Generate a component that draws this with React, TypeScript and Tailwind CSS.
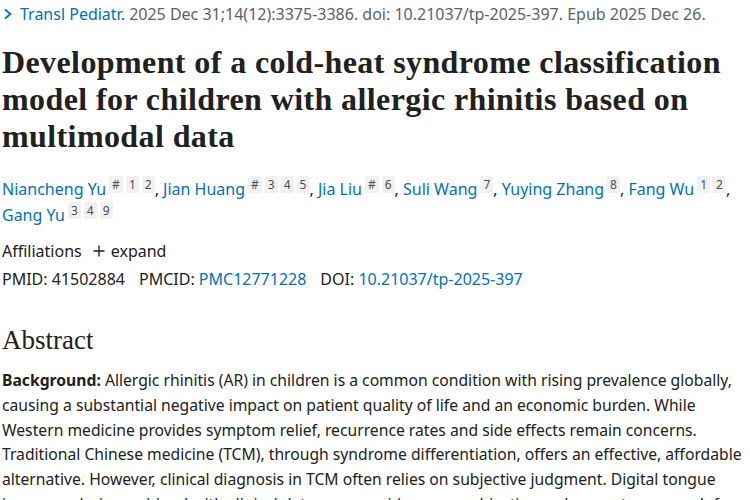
import React from "react"

const authors = [
  { name: "Niancheng Yu", sups: ["#", "1", "2"] },
  { name: "Jian Huang", sups: ["#", "3", "4", "5"] },
  { name: "Jia Liu", sups: ["#", "6"] },
  { name: "Suli Wang", sups: ["7"] },
  { name: "Yuying Zhang", sups: ["8"] },
  { name: "Fang Wu", sups: ["1", "2"] },
  { name: "Gang Yu", sups: ["3", "4", "9"] },
]

function Sup({ label }: { label: string }) {
  return (
    <span className="ml-[3px] inline-block rounded-[2px] bg-[#f1f1f1] px-[3px] align-[6px] text-[12px] leading-[17px] text-[#4d4d4d]">
      {label}
    </span>
  )
}

export default function App() {
  return (
    <div
      className="w-[750px] h-[500px] overflow-hidden bg-white pl-[2px] pr-[8px] text-[#212121]"
      style={{ fontFamily: '"Noto Sans", "Open Sans", sans-serif' }}
    >
      {/* citation line */}
      <div className="flex items-center pt-[2px] text-[16px] leading-[24px] text-[#5b616b]">
        <svg width="12" height="14" viewBox="0 0 12 14" className="mr-[6px]">
          <path d="M3 2.5 L8.5 7 L3 11.5" fill="none" stroke="#0071bc" strokeWidth="1.8" />
        </svg>
        <span className="text-[#0071bc]">Transl Pediatr.</span>
        <span>&nbsp;2025 Dec 31;14(12):3375-3386. doi: 10.21037/tp-2025-397. Epub 2025 Dec 26.</span>
      </div>

      {/* title */}
      <h1
        className="mt-[18px] text-[32px] font-bold leading-[37px] tracking-[0.4px] text-[#212121]"
        style={{ fontFamily: '"Liberation Serif", "DejaVu Serif", serif' }}
      >
        Development of a cold-heat syndrome classification model for children with allergic rhinitis based on
        multimodal data
      </h1>

      {/* authors */}
      <div className="mt-[21px] text-[16px] leading-[25px]">
        {authors.map((a, i) => (
          <React.Fragment key={a.name}>
            <span className="text-[#0071bc]">{a.name}</span>
            {a.sups.map((s) => (
              <Sup key={s} label={s} />
            ))}
            {i < authors.length - 1 && <span className="text-[#212121]">, </span>}
          </React.Fragment>
        ))}
      </div>

      {/* affiliations */}
      <div className="mt-[11px] flex items-center text-[16px] leading-[24px]">
        <span>Affiliations</span>
        <svg width="12" height="12" viewBox="0 0 12 12" className="ml-[11px] mr-[6px]">
          <path d="M6 0.5 V11.5 M0.5 6 H11.5" stroke="#212121" strokeWidth="1.4" />
        </svg>
        <span>expand</span>
      </div>

      {/* ids */}
      <div className="mt-[4px] flex gap-[14px] text-[16px] leading-[24px]">
        <span>PMID: 41502884</span>
        <span>
          PMCID: <span className="text-[#0071bc]">PMC12771228</span>
        </span>
        <span>
          DOI: <span className="text-[#0071bc]">10.21037/tp-2025-397</span>
        </span>
      </div>

      {/* abstract */}
      <h2
        className="mt-[32px] text-[27px] leading-[34px] text-[#212121]"
        style={{ fontFamily: '"Liberation Serif", "DejaVu Serif", serif' }}
      >
        Abstract
      </h2>
      <p className="mt-[11px] text-[15.7px] leading-[24.8px]">
        <strong className="font-bold">Background:</strong> Allergic rhinitis (AR) in children is a common condition
        with rising prevalence globally, causing a substantial negative impact on patient quality of life and an
        economic burden. While Western medicine provides symptom relief, recurrence rates and side effects remain
        concerns. Traditional Chinese medicine (TCM), through syndrome differentiation, offers an effective,
        affordable alternative. However, clinical diagnosis in TCM often relies on subjective judgment. Digital
        tongue image analysis combined with clinical data may provide a more objective and accurate approach for
        syndrome classification.
      </p>
    </div>
  )
}
